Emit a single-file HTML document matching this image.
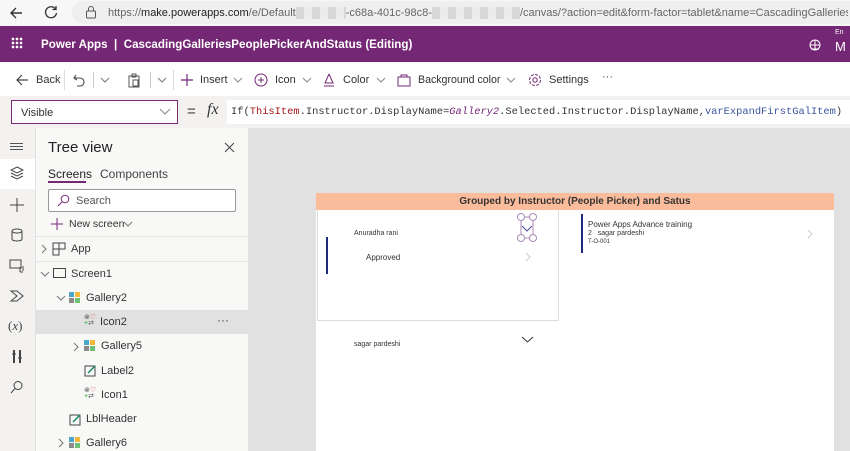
<!DOCTYPE html>
<html><head><meta charset="utf-8"><style>
*{box-sizing:border-box;margin:0;padding:0}
body{width:850px;height:451px;overflow:hidden;font-family:"Liberation Sans",sans-serif;background:#fff;position:relative;color:#323130}
.a{position:absolute}
.mono{font-family:"Liberation Mono",monospace}
svg{position:absolute}
</style></head><body>
<!-- browser bar -->
<div class="a" style="left:0;top:0;width:850px;height:26px;background:#f7f7f7"></div>
<div class="a" style="left:72px;top:1px;width:790px;height:23px;background:#efefef;border-radius:12px"></div>
<svg style="left:8px;top:5px" width="16" height="16"><path d="M14 8H3M8 3L3 8l5 5" stroke="#333" stroke-width="1.4" fill="none"/></svg>
<svg style="left:43px;top:4px" width="16" height="16"><path d="M12.5 5A5.5 5.5 0 1 0 13.5 9M13 2v3.5H9.5" stroke="#333" stroke-width="1.3" fill="none"/></svg>
<svg style="left:85px;top:5px" width="12" height="14"><rect x="1.5" y="6" width="9" height="7" rx="1" stroke="#555" fill="none"/><path d="M3.5 6V4a2.5 2.5 0 0 1 5 0v2" stroke="#555" fill="none"/></svg>
<div class="a" style="left:108px;top:7px;font-size:11px;color:#666;white-space:nowrap;width:740px;overflow:hidden">https://<span style="color:#222">make.powerapps.com</span>/e/Default<span style="display:inline-block;width:50px;height:12px;background:repeating-linear-gradient(90deg,#d8d8d8 0 8px,#ececec 8px 16px);vertical-align:middle"></span>-c68a-401c-98c8-<span style="display:inline-block;width:88px;height:12px;background:repeating-linear-gradient(90deg,#d8d8d8 0 8px,#ececec 8px 16px);vertical-align:middle"></span>/canvas/?action=edit&amp;form-factor=tablet&amp;name=CascadingGalleriesPeopl</div>
<!-- purple bar -->
<div class="a" style="left:0;top:26px;width:850px;height:36px;background:#742774"></div>
<div class="a" style="left:11px;top:37px;width:12px;height:12px;background:radial-gradient(circle,#fff 1.2px,transparent 1.5px) 0 0/4px 4px"></div>
<div class="a" style="left:41px;top:38px;color:#fff;font-size:11.6px;font-weight:bold;white-space:nowrap">Power Apps &nbsp;| &nbsp;CascadingGalleriesPeoplePickerAndStatus (Editing)</div>
<svg style="left:808px;top:38px" width="14" height="14"><circle cx="7" cy="7" r="5" stroke="#fff" fill="none"/><path d="M2 7h10M7 2v10M3 11h8" stroke="#fff"/></svg>
<div class="a" style="left:835px;top:29px;color:#fff;font-size:7px">En</div>
<div class="a" style="left:835px;top:39px;color:#fff;font-size:13px">M</div>
<!-- command bar -->
<div class="a" style="left:0;top:62px;width:850px;height:34px;background:#fff"></div>
<div class="a" style="top:72px;left:0;font-size:11px;color:#323130;white-space:nowrap;width:850px;height:16px">
<svg style="left:15px;top:1px" width="14" height="14"><path d="M13 7H2M7 2L2 7l5 5" stroke="#444" stroke-width="1.2" fill="none"/></svg>
<span class="a" style="left:36px;top:2px">Back</span>
<div class="a" style="left:64px;top:-2px;width:1px;height:20px;background:#ddd"></div>
<svg style="left:72px;top:1px" width="14" height="14"><path d="M4 2L2 5l3 2M2 5h6a4 4 0 0 1 0 8H5" stroke="#444" stroke-width="1.1" fill="none"/></svg>
<div class="a" style="left:93px;top:0;width:1px;height:16px;background:#ccc"></div>
<svg style="left:100px;top:4px" width="10" height="8"><path d="M1 2l4 4 4-4" stroke="#777" fill="none"/></svg>
<svg style="left:127px;top:1px" width="14" height="15"><rect x="2" y="3" width="10" height="11" stroke="#555" fill="none"/><rect x="5" y="1" width="4" height="3" stroke="#555" fill="none"/><rect x="6" y="7" width="5" height="6" stroke="#555" fill="none"/></svg>
<div class="a" style="left:150px;top:0;width:1px;height:16px;background:#ccc"></div>
<svg style="left:157px;top:4px" width="10" height="8"><path d="M1 2l4 4 4-4" stroke="#777" fill="none"/></svg>
<div class="a" style="left:173px;top:-2px;width:1px;height:20px;background:#ddd"></div>
<svg style="left:180px;top:1px" width="14" height="14"><path d="M7 1v12M1 7h12" stroke="#742774" stroke-width="1.2"/></svg>
<span class="a" style="left:200px;top:2px">Insert</span>
<svg style="left:233px;top:4px" width="10" height="8"><path d="M1 2l4 4 4-4" stroke="#888" fill="none"/></svg>
<svg style="left:254px;top:1px" width="14" height="14"><circle cx="7" cy="7" r="6" stroke="#742774" fill="none"/><path d="M7 4v6M4 7h6" stroke="#742774"/></svg>
<span class="a" style="left:275px;top:2px">Icon</span>
<svg style="left:302px;top:4px" width="10" height="8"><path d="M1 2l4 4 4-4" stroke="#888" fill="none"/></svg>
<svg style="left:322px;top:0px" width="14" height="16"><path d="M7 2L3 11h8L7 2M2 14h10" stroke="#742774" fill="none"/></svg>
<span class="a" style="left:343px;top:2px">Color</span>
<svg style="left:376px;top:4px" width="10" height="8"><path d="M1 2l4 4 4-4" stroke="#888" fill="none"/></svg>
<svg style="left:397px;top:1px" width="14" height="14"><rect x="1" y="4" width="12" height="9" stroke="#742774" fill="none"/><path d="M4 4V2h6v2" stroke="#742774" fill="none"/></svg>
<span class="a" style="left:418px;top:2px;font-size:10.6px">Background color</span>
<svg style="left:506px;top:4px" width="10" height="8"><path d="M1 2l4 4 4-4" stroke="#888" fill="none"/></svg>
<svg style="left:528px;top:1px" width="14" height="14"><circle cx="7" cy="7" r="2.2" stroke="#742774" fill="none"/><circle cx="7" cy="7" r="5.5" stroke="#742774" fill="none" stroke-dasharray="3 1.3"/></svg>
<span class="a" style="left:549px;top:2px">Settings</span>
<span class="a" style="left:602px;top:-1px;color:#555">···</span>
</div>
<!-- formula bar -->
<div class="a" style="left:0;top:96px;width:850px;height:32px;background:#f3f2f1"></div>
<div class="a" style="left:11px;top:100px;width:167px;height:24px;background:#fff;border:1px solid #742774;font-size:11px;padding:6px 0 0 9px">Visible</div>
<svg style="left:159px;top:108px" width="12" height="8"><path d="M1 1l5 5 5-5" stroke="#888" fill="none"/></svg>
<div class="a" style="left:187px;top:103px;font-size:15px;color:#444">=</div>
<div class="a" style="left:207px;top:101px;font-size:16px;font-family:'Liberation Serif',serif;font-style:italic;color:#333">fx</div>
<div class="a" style="left:227px;top:100px;width:623px;height:24px;background:#fff"></div>
<div class="a mono" style="left:231px;top:106px;font-size:10.4px;color:#333;white-space:nowrap">If(<span style="color:#a31515">ThisItem</span>.Instructor.DisplayName=<i style="color:#742774">Gallery2</i>.Selected.Instructor.DisplayName,<span style="color:#3a55a0">varExpandFirstGalItem</span>)</div>
<!-- left rail -->
<div class="a" style="left:0;top:128px;width:36px;height:323px;background:#f3f2f1;border-right:1px solid #e1e1e1"></div>
<div class="a" style="left:0;top:159px;width:35px;height:30px;background:#fff"></div>
<div class="a" style="left:10px;top:143px;width:13px;height:7px;border-top:1px solid #555;border-bottom:1px solid #555"></div>
<div class="a" style="left:10px;top:146px;width:13px;height:1px;background:#555"></div>
<svg style="left:10px;top:166px" width="14" height="14"><path d="M7 1l6 3-6 3-6-3zM1 7l6 3 6-3M1 10l6 3 6-3" stroke="#444" fill="none"/></svg>
<svg style="left:9px;top:197px" width="16" height="16"><path d="M8 1v14M1 8h14" stroke="#444"/></svg>
<svg style="left:11px;top:228px" width="12" height="14"><ellipse cx="6" cy="3" rx="5" ry="2" stroke="#444" fill="none"/><path d="M1 3v8c0 2.6 10 2.6 10 0V3" stroke="#444" fill="none"/></svg>
<svg style="left:9px;top:258px" width="16" height="16"><rect x="1" y="2" width="11" height="8" stroke="#444" fill="none"/><path d="M11 9v5M14 8v5M11 14h3" stroke="#444" fill="none"/></svg>
<svg style="left:9px;top:289px" width="16" height="14"><path d="M2 2h6l6 5-6 5H2l6-5z" stroke="#444" fill="none"/></svg>
<div class="a" style="left:8px;top:318px;font-size:13px;font-family:'Liberation Serif',serif;color:#444">(<i>x</i>)</div>
<svg style="left:11px;top:349px" width="12" height="15"><path d="M3 1v13M9 1v13" stroke="#444" stroke-width="2"/><path d="M1 5h4M7 9h4" stroke="#444"/></svg>
<svg style="left:10px;top:380px" width="14" height="14"><circle cx="8" cy="5.5" r="4" stroke="#444" fill="none"/><path d="M5 8.5L1 13" stroke="#444"/></svg>
<!-- tree panel -->
<div class="a" style="left:36px;top:128px;width:212px;height:323px;background:#f8f8f7"></div>
<div class="a" style="left:48px;top:139px;font-size:15px;color:#222">Tree view</div>
<svg style="left:224px;top:142px" width="11" height="11"><path d="M1 1l9 9M10 1l-9 9" stroke="#444"/></svg>
<div class="a" style="left:48px;top:167px;font-size:12px;color:#222">Screens</div>
<div class="a" style="left:48px;top:181px;width:38px;height:2px;background:#742774"></div>
<div class="a" style="left:100px;top:167px;font-size:12px;color:#444">Components</div>
<div class="a" style="left:48px;top:189px;width:188px;height:23px;background:#fff;border:1px solid #999;border-radius:2px"></div>
<svg style="left:57px;top:194px" width="13" height="13"><circle cx="8" cy="5" r="3.8" stroke="#742774" fill="none"/><path d="M5.3 7.7L1 12" stroke="#742774"/></svg>
<div class="a" style="left:76px;top:195px;font-size:11px;color:#555">Search</div>
<svg style="left:50px;top:217px" width="14" height="14"><path d="M7 1v12M1 7h12" stroke="#742774"/></svg>
<div class="a" style="left:69px;top:218px;font-size:10.5px;color:#333">New screen</div>
<svg style="left:123px;top:221px" width="10" height="7"><path d="M1 1l4 4 4-4" stroke="#777" fill="none"/></svg>
<div class="a" style="left:36px;top:236px;width:212px;height:1px;background:#e6e6e6"></div>
<div class="a" style="left:36px;top:261px;width:212px;height:1px;background:#e6e6e6"></div>
<div class="a" style="left:36px;top:310px;width:212px;height:24px;background:#e1e1e1"></div>
<div style="font-size:11px;color:#333">
<svg style="left:40px;top:244px" width="8" height="10"><path d="M2 1l4 4-4 4" stroke="#777" fill="none"/></svg>
<svg style="left:52px;top:242px" width="14" height="14"><path d="M1 1h12v6H7v6H1zM1 7h6M7 1v6" stroke="#444" fill="none"/></svg>
<div class="a" style="left:71px;top:243px">App</div>
<svg style="left:40px;top:271px" width="10" height="8"><path d="M1 1l4 4 4-4" stroke="#777" fill="none"/></svg>
<div class="a" style="left:53px;top:268px;width:13px;height:10px;border:1px solid #444"></div>
<div class="a" style="left:71px;top:268px">Screen1</div>
<svg style="left:56px;top:295px" width="10" height="8"><path d="M1 1l4 4 4-4" stroke="#777" fill="none"/></svg>
<div class="a" style="left:69px;top:292px;width:5px;height:5px;background:#4aa7c9"></div><div class="a" style="left:75px;top:292px;width:5px;height:5px;background:#f2b83a"></div><div class="a" style="left:69px;top:298px;width:5px;height:5px;background:#8a8a8a"></div><div class="a" style="left:75px;top:298px;width:5px;height:5px;background:#6cc078"></div>
<div class="a" style="left:86px;top:292px">Gallery2</div>
<div class="a" style="left:84px;top:315px;font-size:7px;line-height:6px;color:#555">⊗<span style="color:#d44">♡</span><br><span style="color:#2a2">+</span>⇄</div>
<div class="a" style="left:100px;top:316px">Icon2</div>
<div class="a" style="left:217px;top:313px;color:#444;font-size:12px">···</div>
<svg style="left:72px;top:342px" width="8" height="10"><path d="M2 1l4 4-4 4" stroke="#777" fill="none"/></svg>
<div class="a" style="left:84px;top:340px;width:5px;height:5px;background:#4aa7c9"></div><div class="a" style="left:90px;top:340px;width:5px;height:5px;background:#f2b83a"></div><div class="a" style="left:84px;top:346px;width:5px;height:5px;background:#8a8a8a"></div><div class="a" style="left:90px;top:346px;width:5px;height:5px;background:#6cc078"></div>
<div class="a" style="left:101px;top:340px">Gallery5</div>
<svg style="left:84px;top:364px" width="13" height="13"><rect x="1" y="2" width="10" height="10" stroke="#444" fill="none"/><path d="M4 9l7-7" stroke="#1a8a6a" stroke-width="1.5"/></svg>
<div class="a" style="left:101px;top:365px">Label2</div>
<div class="a" style="left:84px;top:388px;font-size:7px;line-height:6px;color:#555">⊗<span style="color:#d44">♡</span><br><span style="color:#2a2">+</span>⇄</div>
<div class="a" style="left:101px;top:389px">Icon1</div>
<svg style="left:69px;top:413px" width="13" height="13"><rect x="1" y="2" width="10" height="10" stroke="#444" fill="none"/><path d="M4 9l7-7" stroke="#1a8a6a" stroke-width="1.5"/></svg>
<div class="a" style="left:86px;top:413px">LblHeader</div>
<svg style="left:57px;top:438px" width="8" height="10"><path d="M2 1l4 4-4 4" stroke="#777" fill="none"/></svg>
<div class="a" style="left:69px;top:437px;width:5px;height:5px;background:#4aa7c9"></div><div class="a" style="left:75px;top:437px;width:5px;height:5px;background:#f2b83a"></div><div class="a" style="left:69px;top:443px;width:5px;height:5px;background:#8a8a8a"></div><div class="a" style="left:75px;top:443px;width:5px;height:5px;background:#6cc078"></div>
<div class="a" style="left:86px;top:437px">Gallery6</div>
</div>
<!-- canvas -->
<div class="a" style="left:248px;top:128px;width:602px;height:323px;background:#e1e1e1"></div>
<div class="a" style="left:316px;top:193px;width:518px;height:258px;background:#fff"></div>
<div class="a" style="left:316px;top:193px;width:518px;height:17px;background:#fbbc9c;font-size:10px;font-weight:bold;color:#333;text-align:center;padding-top:3px">Grouped by Instructor (People Picker) and Satus</div>
<div class="a" style="left:317px;top:210px;width:242px;height:111px;border:1px solid #ddd;border-top:none"></div>
<div class="a" style="left:326px;top:237px;width:2px;height:37px;background:#1f2a7a"></div>
<div class="a" style="left:354px;top:230px;font-size:7px;color:#333">Anuradha rani</div>
<div class="a" style="left:366px;top:253px;font-size:8px;color:#333">Approved</div>
<svg style="left:525px;top:252px" width="6" height="10"><path d="M1 1l4 4-4 4" stroke="#ccc" fill="none"/></svg>
<svg style="left:516px;top:212px" width="22" height="32"><rect x="5" y="5" width="12" height="21" stroke="#a98ab8" fill="none"/><circle cx="5" cy="5" r="3.5" stroke="#a98ab8" fill="#fff"/><circle cx="17" cy="5" r="3.5" stroke="#a98ab8" fill="#fff"/><circle cx="5" cy="26" r="3.5" stroke="#a98ab8" fill="#fff"/><circle cx="17" cy="26" r="3.5" stroke="#a98ab8" fill="#fff"/><path d="M6 14l5 5 5-5" stroke="#4a4a9a" fill="none"/></svg>
<div class="a" style="left:581px;top:214px;width:2px;height:39px;background:#1f2a7a"></div>
<div class="a" style="left:588px;top:220px;font-size:8px;color:#333">Power Apps Advance training</div>
<div class="a" style="left:588px;top:230px;font-size:7px;color:#333">2 &nbsp;&nbsp;sagar pardeshi</div>
<div class="a" style="left:588px;top:239px;font-size:6px;color:#333">T-O-001</div>
<svg style="left:807px;top:229px" width="6" height="10"><path d="M1 1l4 4-4 4" stroke="#ccc" fill="none"/></svg>
<div class="a" style="left:354px;top:341px;font-size:7px;color:#333">sagar pardeshi</div>
<svg style="left:521px;top:336px" width="13" height="8"><path d="M1 1l5.5 5 5.5-5" stroke="#333" fill="none"/></svg>
</body></html>
